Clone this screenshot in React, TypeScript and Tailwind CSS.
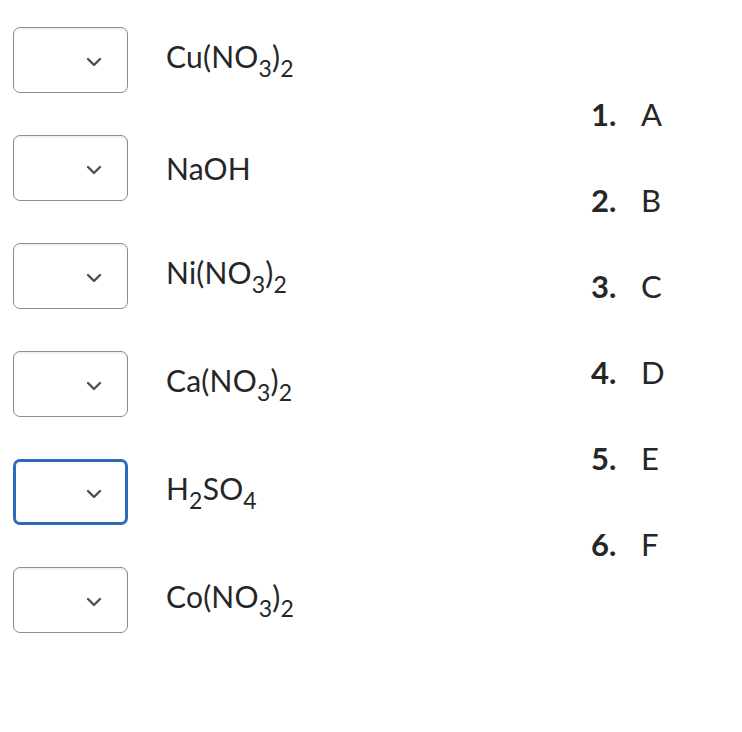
import { ChevronDown } from 'lucide-react'

type Formula = { parts: { t: string; sub?: boolean }[] }

const formulas: Formula[] = [
  { parts: [{ t: 'Cu(NO' }, { t: '3', sub: true }, { t: ')' }, { t: '2', sub: true }] },
  { parts: [{ t: 'NaOH' }] },
  { parts: [{ t: 'Ni(NO' }, { t: '3', sub: true }, { t: ')' }, { t: '2', sub: true }] },
  { parts: [{ t: 'Ca(NO' }, { t: '3', sub: true }, { t: ')' }, { t: '2', sub: true }] },
  { parts: [{ t: 'H' }, { t: '2', sub: true }, { t: 'SO' }, { t: '4', sub: true }] },
  { parts: [{ t: 'Co(NO' }, { t: '3', sub: true }, { t: ')' }, { t: '2', sub: true }] },
]

const answers = ['A', 'B', 'C', 'D', 'E', 'F']

function SelectBox({ focused }: { focused?: boolean }) {
  return (
    <div
      className={`w-[115px] h-[66px] rounded-[7px] bg-white flex items-center justify-end ${
        focused
          ? 'border-[3px] border-[#2d6bb7] pr-[19px]'
          : 'border border-[#8c8c8c] shadow-[inset_0_2px_2px_rgba(0,0,0,0.06)] pr-[21px]'
      }`}
    >
      <ChevronDown size={24} strokeWidth={2.4} className="text-[#4f4f4f] mt-[4px]" />
    </div>
  )
}

export default function App() {
  return (
    <div
      className="w-[742px] h-[732px] bg-white flex text-[#262626]"
      style={{ fontFamily: 'Lato, "Open Sans", sans-serif' }}
    >
      <div className="flex flex-col gap-[42px] pt-[27px] pl-[13px]">
        {formulas.map((f, i) => (
          <div key={i} className="flex items-center h-[66px]">
            <SelectBox focused={i === 4} />
            <span className="ml-[38px] text-[30px] tracking-[0.2px] leading-none">
              {f.parts.map((p, j) =>
                p.sub ? (
                  <span key={j} className="text-[23px] align-[-9px]">
                    {p.t}
                  </span>
                ) : (
                  <span key={j}>{p.t}</span>
                )
              )}
            </span>
          </div>
        ))}
      </div>
      <ol className="ml-[297px] pt-[96px] flex flex-col gap-[50px] text-[31px] leading-[36px]">
        {answers.map((a, i) => (
          <li key={a} className="flex">
            <span className="w-[50px] font-bold">{i + 1}.</span>
            <span>{a}</span>
          </li>
        ))}
      </ol>
    </div>
  )
}
